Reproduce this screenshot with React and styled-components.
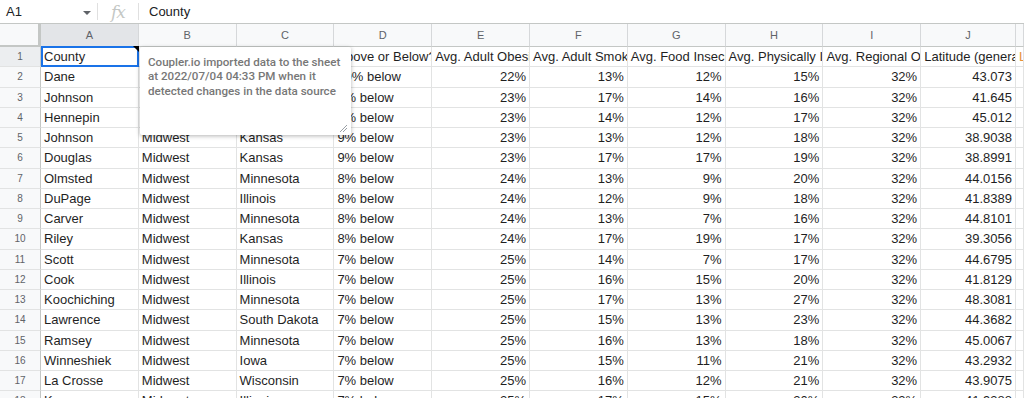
import React from "react";
import styled, { createGlobalStyle } from "styled-components";

const GlobalStyle = createGlobalStyle`
  body {
    margin: 0;
    background: #fff;
    font-family: "Liberation Sans", Arial, sans-serif;
  }
`;

const COLS = ["A", "B", "C", "D", "E", "F", "G", "H", "I", "J", "K"];
const ROW_H = 20.25;

const header = [
  "County",
  "Region",
  "State",
  "Above or Below?",
  "Avg. Adult Obesity",
  "Avg. Adult Smoking",
  "Avg. Food Insecurity",
  "Avg. Physically Inactive",
  "Avg. Regional Obesity",
  "Latitude (general)",
  "Longitude",
];

// B2:C4 sit under the note, so they're left blank here
const rows = [
  ["Dane", "", "", "10% below", "22%", "13%", "12%", "15%", "32%", "43.073"],
  ["Johnson", "", "", "9% below", "23%", "17%", "14%", "16%", "32%", "41.645"],
  ["Hennepin", "", "", "9% below", "23%", "14%", "12%", "17%", "32%", "45.012"],
  ["Johnson", "Midwest", "Kansas", "9% below", "23%", "13%", "12%", "18%", "32%", "38.9038"],
  ["Douglas", "Midwest", "Kansas", "9% below", "23%", "17%", "17%", "19%", "32%", "38.8991"],
  ["Olmsted", "Midwest", "Minnesota", "8% below", "24%", "13%", "9%", "20%", "32%", "44.0156"],
  ["DuPage", "Midwest", "Illinois", "8% below", "24%", "12%", "9%", "18%", "32%", "41.8389"],
  ["Carver", "Midwest", "Minnesota", "8% below", "24%", "13%", "7%", "16%", "32%", "44.8101"],
  ["Riley", "Midwest", "Kansas", "8% below", "24%", "17%", "19%", "17%", "32%", "39.3056"],
  ["Scott", "Midwest", "Minnesota", "7% below", "25%", "14%", "7%", "17%", "32%", "44.6795"],
  ["Cook", "Midwest", "Illinois", "7% below", "25%", "16%", "15%", "20%", "32%", "41.8129"],
  ["Koochiching", "Midwest", "Minnesota", "7% below", "25%", "17%", "13%", "27%", "32%", "48.3081"],
  ["Lawrence", "Midwest", "South Dakota", "7% below", "25%", "15%", "13%", "23%", "32%", "44.3682"],
  ["Ramsey", "Midwest", "Minnesota", "7% below", "25%", "16%", "13%", "18%", "32%", "45.0067"],
  ["Winneshiek", "Midwest", "Iowa", "7% below", "25%", "15%", "11%", "21%", "32%", "43.2932"],
  ["La Crosse", "Midwest", "Wisconsin", "7% below", "25%", "16%", "12%", "21%", "32%", "43.9075"],
  ["Kane", "Midwest", "Illinois", "7% below", "25%", "17%", "15%", "20%", "32%", "41.9388"],
];

export default function App() {
  return (
    <>
      <GlobalStyle />
      <Page>
        <FormulaBar>
          <NameBox>
            <span>A1</span>
            <Caret />
          </NameBox>
          <Divider />
          <Fx>fx</Fx>
          <Divider />
          <FormulaText>County</FormulaText>
        </FormulaBar>

        <GridWrap>
          <Grid>
            <Corner />
            {COLS.map((c) => (
              <ColHead key={c} $selected={c === "A"}>
                {c === "K" ? "" : c}
              </ColHead>
            ))}

            <RowHead $selected>1</RowHead>
            {header.map((h, i) => (
              <Cell key={i} $accent={i === 10}>
                {i === 1 || i === 2 ? "" : h}
              </Cell>
            ))}

            {rows.map((r, ri) => (
              <React.Fragment key={ri}>
                <RowHead>{ri + 2}</RowHead>
                {r.map((v, ci) => (
                  <Cell key={ci} $right={ci >= 4}>
                    {v}
                  </Cell>
                ))}
                <Cell />
              </React.Fragment>
            ))}
          </Grid>

          <Selection>
            <NoteMarker />
          </Selection>

          <Note>
            Coupler.io imported data to the sheet at 2022/07/04 04:33 PM when it
            detected changes in the data source
            <Grip viewBox="0 0 10 10">
              <path d="M2 9 L9 2 M5 9 L9 5" stroke="#9aa0a6" strokeWidth="1" fill="none" />
            </Grip>
          </Note>
        </GridWrap>
      </Page>
    </>
  );
}

const Page = styled.div`
  width: 1024px;
  height: 398px;
  overflow: hidden;
  color: #222;
`;

const FormulaBar = styled.div`
  display: flex;
  align-items: center;
  height: 23px;
  font-size: 13px;
`;

const NameBox = styled.div`
  display: flex;
  align-items: center;
  justify-content: space-between;
  width: 85px;
  padding: 0 6px 0 6px;
  color: #202124;
`;

const Caret = styled.span`
  width: 0;
  height: 0;
  border-left: 4px solid transparent;
  border-right: 4px solid transparent;
  border-top: 4px solid #5f6368;
  margin-top: 2px;
`;

const Divider = styled.div`
  width: 1px;
  height: 17px;
  background: #e0e0e0;
`;

const Fx = styled.span`
  width: 40px;
  text-align: center;
  font-family: "DejaVu Serif", "Liberation Serif", serif;
  font-style: italic;
  font-size: 17px;
  color: #c4c7c5;
  letter-spacing: -1px;
`;

const FormulaText = styled.span`
  padding-left: 10px;
  color: #202124;
`;

const GridWrap = styled.div`
  position: relative;
`;

const Grid = styled.div`
  display: grid;
  grid-template-columns: 41px repeat(9, 97.8px) 94.8px 1fr;
  grid-template-rows: 23px;
  grid-auto-rows: ${ROW_H}px;
  border-top: 1px solid #c4c7c5;
`;

const Corner = styled.div`
  background: #f8f9fa;
  border-right: 3px solid #c4c7c5;
  border-bottom: 2px solid #c4c7c5;
`;

const ColHead = styled.div`
  display: flex;
  align-items: center;
  justify-content: center;
  background: ${(p) => (p.$selected ? "#e3e5e8" : "#f8f9fa")};
  border-right: 1px solid #d6d8da;
  border-bottom: 1px solid #c4c7c5;
  font-size: 11px;
  color: #5f6368;
`;

const RowHead = styled.div`
  display: flex;
  align-items: center;
  justify-content: center;
  background: ${(p) => (p.$selected ? "#eceef0" : "#f8f9fa")};
  border-right: 1px solid #c4c7c5;
  border-bottom: 1px solid #e2e3e3;
  font-size: 10px;
  color: #5f6368;
`;

const Cell = styled.div`
  box-sizing: border-box;
  padding: 0 3px;
  border-right: 1px solid #e2e3e3;
  border-bottom: 1px solid #e2e3e3;
  font-size: 13px;
  line-height: 20px;
  white-space: nowrap;
  overflow: hidden;
  text-align: ${(p) => (p.$right ? "right" : "left")};
  color: ${(p) => (p.$accent ? "#e69138" : "#1f1f1f")};
`;

const Selection = styled.div`
  position: absolute;
  left: 41px;
  top: 23px;
  width: 98px;
  height: 21px;
  box-sizing: border-box;
  border: 2px solid #1a73e8;
`;

const NoteMarker = styled.span`
  position: absolute;
  right: -2px;
  top: -2px;
  width: 0;
  height: 0;
  border-top: 6px solid #000;
  border-left: 6px solid transparent;
`;

const Note = styled.div`
  position: absolute;
  left: 140px;
  top: 24px;
  width: 196px;
  height: 80px;
  padding: 8px 7px 0 8px;
  background: #fff;
  box-shadow: 0 1px 4px rgba(0, 0, 0, 0.3);
  border-radius: 2px;
  font-family: Roboto, "Liberation Sans", sans-serif;
  font-weight: 500;
  font-size: 11.6px;
  line-height: 14.4px;
  color: #777;
`;

const Grip = styled.svg`
  position: absolute;
  right: 3px;
  bottom: 2px;
  width: 10px;
  height: 10px;
`;
